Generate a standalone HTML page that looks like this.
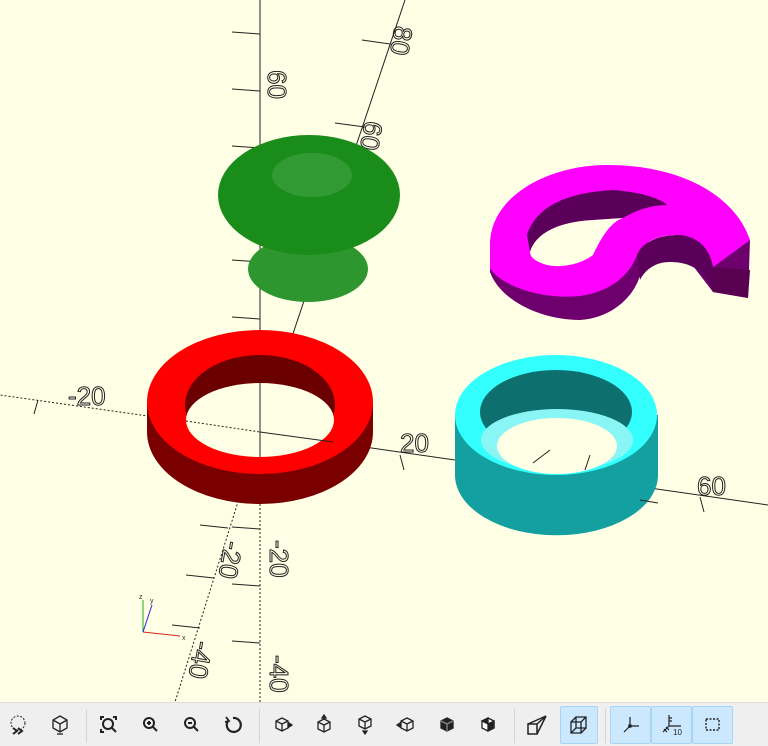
<!DOCTYPE html>
<html><head><meta charset="utf-8"><style>
html,body{margin:0;padding:0;width:768px;height:745px;overflow:hidden;background:#ffffe5;font-family:"Liberation Sans",sans-serif}
#tb{position:absolute;left:0;top:702px;width:768px;height:43px;background:#efefef;border-top:1px solid #ddd}
.b{position:absolute;top:3px;width:38px;height:38px;display:flex;align-items:center;justify-content:center}
.on{background:#cce8ff;border:1px solid #a8d4f5;box-sizing:border-box;border-radius:2px}
.sep{position:absolute;top:6px;width:1px;height:34px;background:#d4d4d4}
</style></head><body>
<svg width="768" height="702" style="position:absolute;left:0;top:0">
<g stroke="#222" stroke-width="1" fill="none">
<line x1="260" y1="0" x2="260" y2="432"/>
<line x1="260" y1="432" x2="260" y2="702" stroke-dasharray="2,2"/>
<line x1="260" y1="432" x2="768" y2="505"/>
<line x1="260" y1="432" x2="0" y2="395" stroke-dasharray="2,2"/>
<line x1="260" y1="432" x2="405" y2="0"/>
<line x1="260" y1="432" x2="175" y2="702" stroke-dasharray="2,2"/>
<path d="M232,32 L260,34 M232,89 L260,91 M232,146 L260,148 M232,203 L260,205 M232,260 L260,262 M232,317 L260,319 M232,527 L260,529 M232,584 L260,586 M232,641 L260,643"/>
<path d="M362,40 L390,44 M335,123 L365,127 M400,455 L404,470 M550,475 L554,490 M700,497 L704,512 M38,400 L34,414 M200,525 L228,528 M186,575 L214,578 M172,625 L200,628"/>
</g>
<g font-size="26" fill="none" stroke="#222" stroke-width="1" font-family="Liberation Sans">
<text x="400" y="452">20</text>
<text x="553" y="470">40</text>
<text x="697" y="495">60</text>
<text x="68" y="405">-20</text>
<text transform="translate(268,70) rotate(90)">60</text>
<text transform="translate(268,180) rotate(90)">40</text>
<text transform="translate(270,540) rotate(90)">-20</text>
<text transform="translate(270,655) rotate(90)">-40</text>
<text transform="translate(395,25) rotate(100)">80</text>
<text transform="translate(365,120) rotate(100)">60</text>
<text transform="translate(225,540) rotate(100)">-20</text>
<text transform="translate(195,640) rotate(100)">-40</text>
</g>
<!-- red ring -->
<path d="M147,402 L147,432 A113,72 0 0 0 373,432 L373,402 Z" fill="#7a0000"/>
<ellipse cx="260" cy="402" rx="113" ry="72" fill="#ff0000"/>
<ellipse cx="260" cy="405" rx="75" ry="50" fill="#6a0000"/>
<ellipse cx="260" cy="420" rx="74" ry="37" fill="#ffffe5"/>
<g stroke="#222" fill="none"><line x1="260" y1="383" x2="260" y2="457"/><line x1="260" y1="432" x2="333" y2="442"/><line x1="186" y1="421" x2="260" y2="432" stroke-dasharray="2,2"/></g>
<!-- cyan ring -->
<path d="M455,415 L455,475 A101,60 0 0 0 658,475 L658,415 Z" fill="#14a0a0"/>
<ellipse cx="556" cy="415" rx="101" ry="60" fill="#33ffff"/>
<ellipse cx="556" cy="412" rx="76" ry="42" fill="#0e6f6f"/>
<ellipse cx="557" cy="440" rx="76" ry="31" fill="#8af5f5"/>
<ellipse cx="557" cy="446" rx="60" ry="28" fill="#ffffe5"/>
<path d="M533,463 L550,450 M590,455 L585,470 M640,500 L658,503" stroke="#222" fill="none"/>
<!-- green -->
<ellipse cx="308" cy="269" rx="60" ry="33" fill="#2e962e"/>
<ellipse cx="309" cy="195" rx="91" ry="60" fill="#1a8c1a"/>
<ellipse cx="312" cy="175" rx="40" ry="22" fill="#4aa84a" opacity="0.5"/>
<!-- magenta -->
<path d="M490,245 L490,272 C500,300 540,320 580,320 C613,318 635,295 640,275 C650,262 670,258 690,262 L713,292 L748,298 L750,240 Z" fill="#6e006e"/>
<path d="M490,245 C490,195 550,165 607,165 C680,165 735,195 750,240 L713,267 C705,245 690,235 675,235 C655,235 640,245 637,255 C630,275 610,292 580,296 C540,300 500,285 490,268 Z" fill="#ff00ff"/>
<path d="M527,235 C535,210 560,193 613,190 C640,192 660,198 667,205 L623,218 L593,220 C555,222 535,235 530,252 Z" fill="#5a005a"/>
<path d="M530,252 C535,235 555,222 593,220 L623,218 C612,225 600,245 593,255 C580,265 560,268 547,265 C537,262 530,258 530,252Z" fill="#ffffe5"/>
<path d="M593,255 C600,240 610,222 623,218 C640,208 655,205 667,205 C700,205 735,218 750,240 L713,267 C705,245 690,235 675,235 C655,235 640,245 637,255 C630,272 610,280 593,255 Z" fill="#ff00ff"/>
<path d="M637,255 C645,240 660,235 680,235 C700,237 710,250 713,267 L713,292 C705,270 690,262 670,262 C655,262 645,270 640,280Z" fill="#5a005a"/>
<path d="M713,267 L750,270 L748,298 L713,292Z" fill="#5a0050"/>
<!-- small axes -->
<g stroke-width="1"><line x1="143" y1="632" x2="143" y2="600" stroke="#2a2"/><line x1="143" y1="632" x2="180" y2="636" stroke="#d22"/><line x1="143" y1="632" x2="152" y2="605" stroke="#22d"/></g>
<text x="139" y="599" font-size="7" fill="#333">z</text><text x="150" y="603" font-size="7" fill="#333">y</text><text x="182" y="640" font-size="7" fill="#333">x</text>
</svg>
<div id="tb">
<div class="b" style="left:0"><svg width="24" height="24" fill="none" stroke="#222"><circle cx="11" cy="10" r="7" stroke-dasharray="2,1.5"/><path d="M6,15 L10,18 L6,21 M11,15 L15,18 L11,21" stroke-width="2"/></svg></div>
<div class="b" style="left:41px"><svg width="24" height="24" fill="none" stroke="#222" stroke-width="1.3"><path d="M12,3 L19,7 L19,15 L12,19 L5,15 L5,7Z M5,7 L12,11 L19,7 M12,11 L12,19"/><path d="M9,21 L15,21"/></svg></div>
<div class="sep" style="left:86px"></div>
<div class="b" style="left:90px"><svg width="24" height="24" fill="none" stroke="#222" stroke-width="2"><circle cx="11" cy="11" r="5"/><path d="M15,15 L19,19 M4,7 L4,4 L7,4 M16,4 L19,4 L19,7 M4,16 L4,19 L7,19"/></svg></div>
<div class="b" style="left:132px"><svg width="24" height="24" fill="none" stroke="#222" stroke-width="2"><circle cx="10" cy="10" r="5"/><path d="M14,14 L18,18 M8,10 L12,10 M10,8 L10,12"/></svg></div>
<div class="b" style="left:173px"><svg width="24" height="24" fill="none" stroke="#222" stroke-width="2"><circle cx="10" cy="10" r="5"/><path d="M14,14 L18,18 M8,10 L12,10"/></svg></div>
<div class="b" style="left:214px"><svg width="24" height="24" fill="none" stroke="#222" stroke-width="2.2"><path d="M7,8 A7,7 0 1 0 12,5"/><path d="M5,4 L8,8 L4,9" stroke-width="1.8"/></svg></div>
<div class="sep" style="left:259px"></div>
<div class="b" style="left:264px"><svg width="24" height="24" fill="none" stroke="#222" stroke-width="1.3"><path d="M11,5 L17,8 L17,15 L11,18 L5,15 L5,8Z M5,8 L11,11 L17,8 M11,11 L11,18"/><path d="M18,10 L21,12 L18,14Z" fill="#222"/></svg></div>
<div class="b" style="left:305px"><svg width="24" height="24" fill="none" stroke="#222" stroke-width="1.3"><path d="M12,6 L18,9 L18,16 L12,19 L6,16 L6,9Z M6,9 L12,12 L18,9 M12,12 L12,19"/><path d="M10,5 L12,2 L14,5Z" fill="#222"/></svg></div>
<div class="b" style="left:346px"><svg width="24" height="24" fill="none" stroke="#222" stroke-width="1.3"><path d="M12,3 L18,6 L18,13 L12,16 L6,13 L6,6Z M6,6 L12,9 L18,6 M12,9 L12,16"/><path d="M10,18 L12,21 L14,18Z" fill="#222"/></svg></div>
<div class="b" style="left:387px"><svg width="24" height="24" fill="none" stroke="#222" stroke-width="1.3"><path d="M13,5 L19,8 L19,15 L13,18 L7,15 L7,8Z M7,8 L13,11 L19,8 M13,11 L13,18"/><path d="M6,10 L3,12 L6,14Z" fill="#222"/></svg></div>
<div class="b" style="left:428px"><svg width="24" height="24" stroke="#222" stroke-width="1.3"><path d="M12,5 L18,8 L18,15 L12,18 L6,15 L6,8Z" fill="#222"/><path d="M6,8 L12,11 L18,8 M12,11 L12,18" stroke="#888" fill="none"/></svg></div>
<div class="b" style="left:469px"><svg width="24" height="24" stroke="#222" stroke-width="1.3"><path d="M12,5 L18,8 L18,15 L12,18 L6,15 L6,8Z" fill="#fff"/><path d="M12,11 L18,8 L18,15 L12,18Z M6,8 L12,5 L12,11Z" fill="#222"/></svg></div>
<div class="sep" style="left:514px"></div>
<div class="b" style="left:519px"><svg width="26" height="26" fill="none" stroke="#222" stroke-width="1.5"><path d="M3,12 L12,12 L12,22 L3,22Z M3,12 L21,4 L12,12 M21,4 L12,22"/></svg></div>
<div class="b on" style="left:560px"><svg width="24" height="24" fill="none" stroke="#222" stroke-width="1.3"><path d="M4,9 L14,9 L14,20 L4,20Z M9,4 L19,4 L19,15 L9,15Z M4,9 L9,4 M14,9 L19,4 M14,20 L19,15 M4,20 L9,15"/></svg></div>
<div class="sep" style="left:605px"></div>
<div class="b on" style="left:610px;width:41px"><svg width="24" height="24" fill="none" stroke="#222" stroke-width="1.2"><path d="M11,4 L11,13 L20,13 M11,13 L5,19"/><circle cx="11" cy="13" r="1.3" fill="#222"/></svg></div>
<div class="b on" style="left:651px;width:41px"><svg width="26" height="26" fill="none" stroke="#222" stroke-width="1.2"><path d="M10,3 L10,14 L22,14 M10,14 L4,20 M10,6 L13,6 M10,9 L13,9 M5,17 L8,20 M7,15 L10,18"/><text x="14" y="23" font-size="8" fill="#222" stroke="none">10</text></svg></div>
<div class="b on" style="left:692px;width:41px"><svg width="24" height="24" fill="none" stroke="#222" stroke-width="1.4"><rect x="5" y="6" width="13" height="11" stroke-dasharray="2,1.5"/></svg></div>
</div>
</body></html>
